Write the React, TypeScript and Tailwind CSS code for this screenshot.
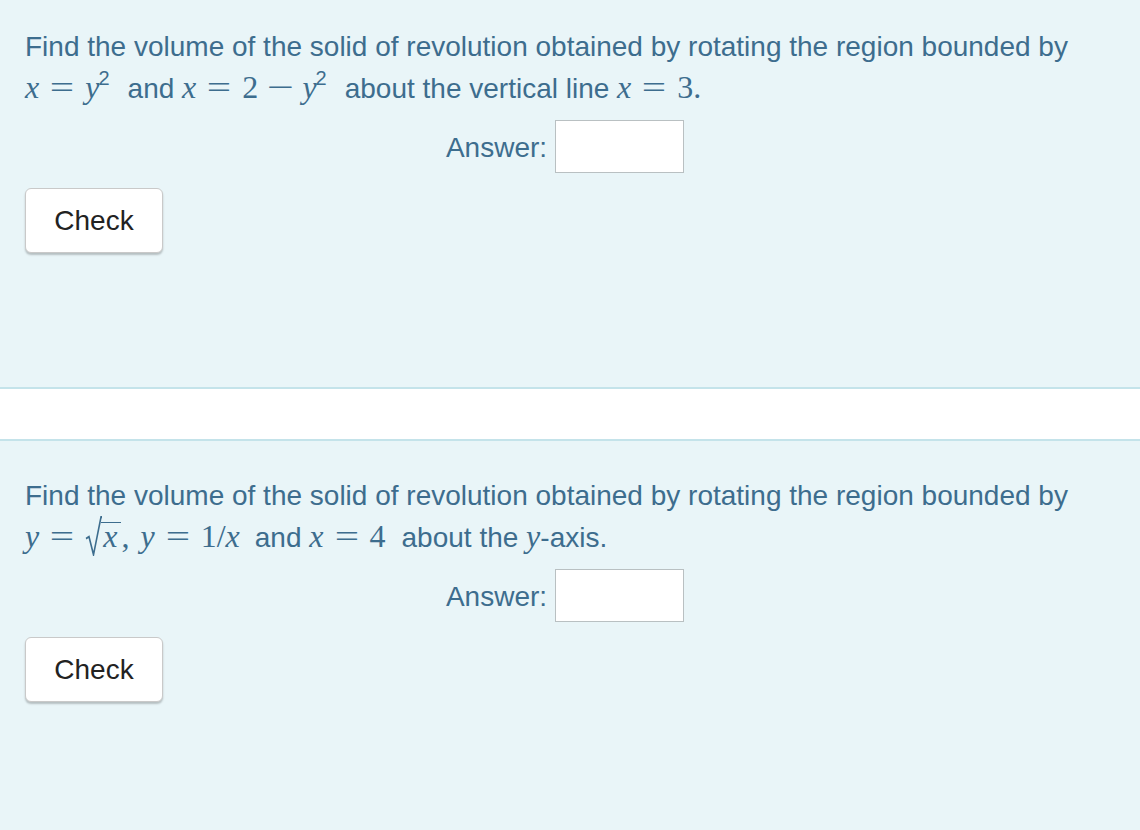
import React from "react";

const M = ({ children }: { children: React.ReactNode }) => (
  <span className="font-['Liberation_Serif',serif] text-[32px]">{children}</span>
);
const I = ({ children }: { children: React.ReactNode }) => <span className="italic">{children}</span>;
const Eq = () => <span className="inline-block mx-[14px] scale-x-[1.35]">=</span>;
const Minus = () => <span className="inline-block mx-[13px] scale-x-[1.5]">−</span>;
const Sup = ({ children }: { children: React.ReactNode }) => (
  <sup className="text-[20px] -top-[13px] ml-[-1px] font-['Liberation_Sans',sans-serif]">{children}</sup>
);

function Answer() {
  return (
    <div className="flex items-center justify-center pr-[15px] mt-[11px]">
      <span className="mr-[8px] relative top-[1px]">Answer:</span>
      <div className="w-[129px] h-[53px] bg-white border border-[#b9c0c2]" />
    </div>
  );
}

function CheckBtn() {
  return (
    <button className="mt-[15px] w-[138px] h-[65px] bg-white border border-[#c9c9c9] rounded-[6px] shadow-[0_2px_2px_rgba(0,0,0,0.22)] text-[#222] text-[28px]">
      Check
    </button>
  );
}

function Sqrt({ children }: { children: React.ReactNode }) {
  return (
    <span className="relative inline-block pl-[16px]">
      <svg
        className="absolute left-0 top-0 h-full w-[17px]"
        viewBox="0 0 17 30"
        preserveAspectRatio="none"
        fill="none"
        stroke="#3d6d8e"
        strokeWidth="1.6"
      >
        <path d="M1 17 L4 15.5 L8.5 29 L16 0.8 L17 0.8" />
      </svg>
      <span className="inline-block border-t-[1.6px] border-[#3d6d8e] leading-[27px] pl-[2px] pr-[4px]">{children}</span>
    </span>
  );
}

export default function App() {
  return (
    <div className="w-[1140px] h-[830px] bg-[#e9f5f8] font-['Liberation_Sans',Arial,sans-serif] text-[#3d6d8e] text-[28px] overflow-hidden">
      <div className="h-[387px] pl-[25px] pr-[20px] pt-[27px]">
        <div className="leading-[40px]">
          <div>Find the volume of the solid of revolution obtained by rotating the region bounded by</div>
          <div className="whitespace-nowrap">
            <M>
              <I>x</I>
              <Eq />
              <I>y</I>
              <Sup>2</Sup>
            </M>
            <span className="ml-[18px]">and</span>{" "}
            <M>
              <I>x</I>
              <Eq />2<Minus />
              <I>y</I>
              <Sup>2</Sup>
            </M>
            <span className="ml-[18px]">about the vertical line</span>{" "}
            <M>
              <I>x</I>
              <Eq />3.
            </M>
          </div>
        </div>
        <Answer />
        <CheckBtn />
      </div>
      <div className="h-[54px] bg-white border-y-2 border-[#c4e3ea]" />
      <div className="pl-[25px] pr-[20px] pt-[35px]">
        <div className="leading-[40px]">
          <div>Find the volume of the solid of revolution obtained by rotating the region bounded by</div>
          <div className="whitespace-nowrap">
            <M>
              <I>y</I>
              <Eq />
              <Sqrt>
                <I>x</I>
              </Sqrt>
              <span className="mr-[11px]">,</span>
              <I>y</I>
              <Eq />1/<I>x</I>
            </M>
            <span className="ml-[15px]">and</span>{" "}
            <M>
              <I>x</I>
              <Eq />4
            </M>
            <span className="ml-[16px]">about the</span>{" "}
            <M>
              <I>y</I>
            </M>
            -axis.
          </div>
        </div>
        <Answer />
        <CheckBtn />
      </div>
    </div>
  );
}
